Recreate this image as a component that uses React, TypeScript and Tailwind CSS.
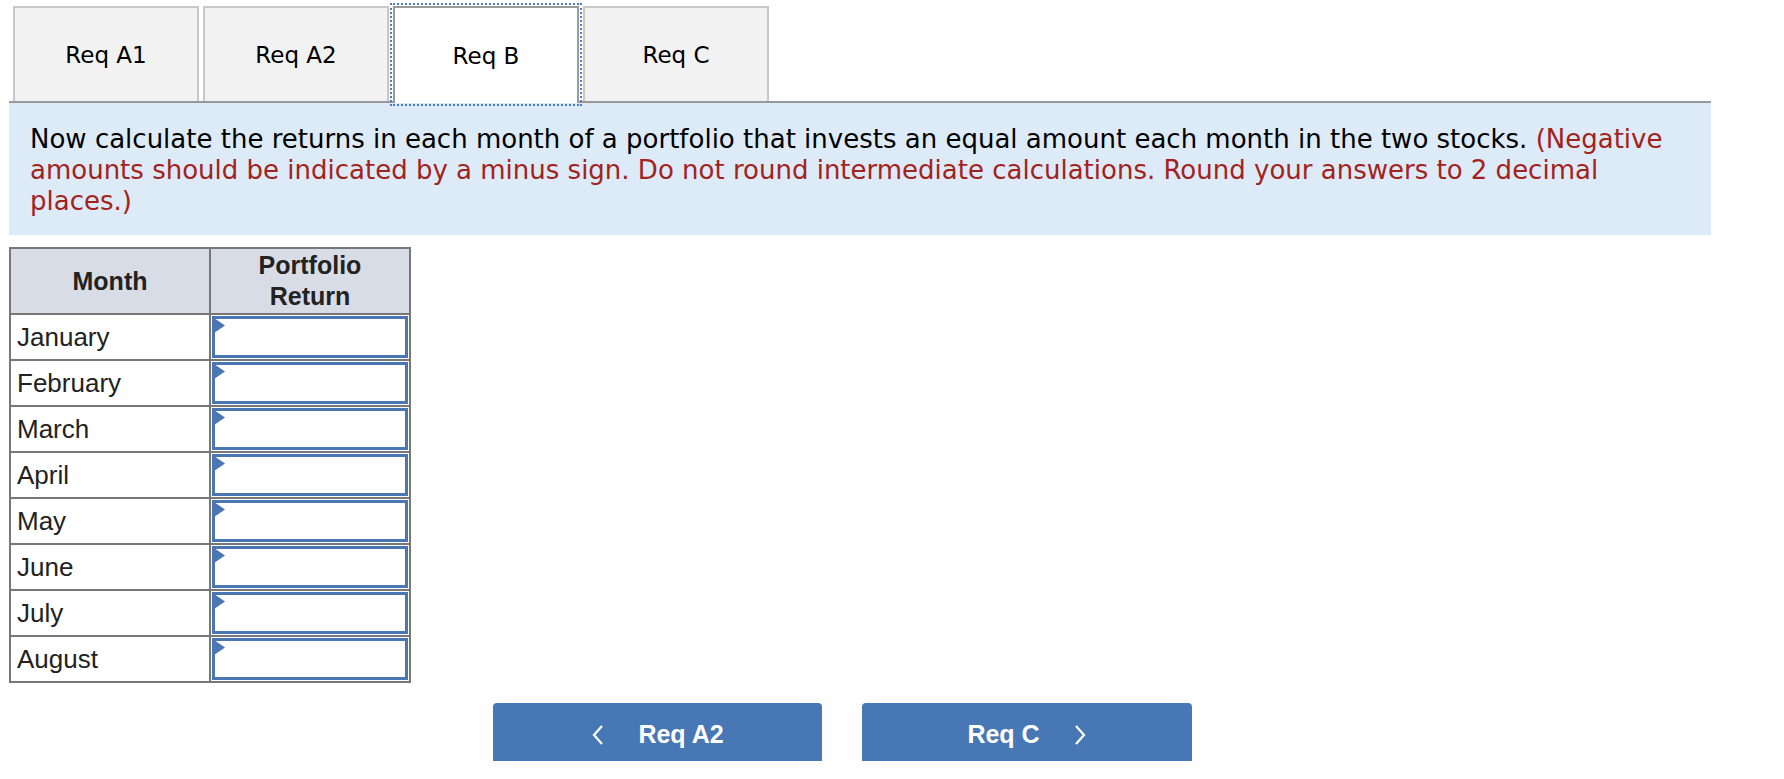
const tabs = ["Req A1", "Req A2", "Req B", "Req C"];
const months = ["January", "February", "March", "April", "May", "June", "July", "August"];

function Chevron({ dir }: { dir: "left" | "right" }) {
  return (
    <svg width="14" height="22" viewBox="0 0 14 22" fill="none" className="shrink-0">
      <polyline
        points={dir === "left" ? "11,2 3,11 11,20" : "3,2 11,11 3,20"}
        stroke="white"
        strokeWidth="2.2"
        strokeLinejoin="miter"
      />
    </svg>
  );
}

export default function App() {
  return (
    <div className="min-h-screen bg-white font-['DejaVu_Sans',Verdana,sans-serif] text-black">
      <div className="ml-[9px] w-[1702px] pt-[6px]">
        {/* Tabs */}
        <div className="flex gap-[4px] border-b-2 border-[#999] pl-[4px]">
          {tabs.map((t) => {
            const active = t === "Req B";
            return active ? (
              <div
                key={t}
                className="relative z-10 -mb-[2px] flex h-[97px] w-[186px] items-center justify-center border-x-2 border-t-2 border-[#9a9a9a] bg-white pt-[2px] text-[23px] outline-2 outline-offset-1 outline-dotted outline-[#4a7bc4]"
              >
                {t}
              </div>
            ) : (
              <div
                key={t}
                className="flex h-[95px] w-[186px] items-center justify-center border-x-2 border-t-2 border-[#c8c8c8] bg-[#f2f2f2] pt-[2px] text-[23px]"
              >
                {t}
              </div>
            );
          })}
        </div>

        {/* Instructions */}
        <p className="bg-[#ddeaf7] px-[21px] pt-[21px] pb-[18px] text-[26px] leading-[31px]">
          Now calculate the returns in each month of a portfolio that invests an equal amount each month in the two
          stocks.{" "}
          <span className="text-[#a3221c]">
            (Negative amounts should be indicated by a minus sign. Do not round intermediate calculations. Round your
            answers to 2 decimal places.)
          </span>
        </p>

        {/* Table */}
        <table className="mt-[12px] border-collapse font-['Liberation_Sans',Arial,sans-serif] text-[#222]">
          <thead>
            <tr className="bg-[#d8dce6] text-[25px]">
              <th className="h-[66px] w-[200px] border-2 border-[#777] px-2 font-bold leading-[31px]">Month</th>
              <th className="h-[66px] w-[200px] border-2 border-[#777] px-2 font-bold leading-[31px]">
                Portfolio
                <br />
                Return
              </th>
            </tr>
          </thead>
          <tbody className="text-[26px]">
            {months.map((m) => (
              <tr key={m}>
                <td className="h-[45px] border-2 border-[#777] px-[6px] text-left font-normal">{m}</td>
                <td className="h-[45px] border-2 border-[#777] p-[1px]">
                  <div className="relative h-[42px] w-full border-[3px] border-[#4a76b4] bg-white">
                    <svg
                      width="11"
                      height="15"
                      viewBox="0 0 11 15"
                      className="absolute -top-[1px] -left-[1px]"
                    >
                      <polygon points="0,0 11,7.5 0,15" fill="#4a76b4" />
                    </svg>
                  </div>
                </td>
              </tr>
            ))}
          </tbody>
        </table>
      </div>

      {/* Navigation buttons */}
      <div className="ml-[493px] mt-[20px] flex gap-[40px] font-['Liberation_Sans',Arial,sans-serif] text-[25px] font-bold text-white">
        <button className="flex h-[58px] w-[329px] items-center justify-center gap-[33px] rounded-t-[4px] bg-[#4877b5] pt-[5px]">
          <Chevron dir="left" />
          <span>Req A2</span>
        </button>
        <button className="flex h-[58px] w-[330px] items-center justify-center gap-[33px] rounded-t-[4px] bg-[#4877b5] pt-[5px]">
          <span>Req C</span>
          <Chevron dir="right" />
        </button>
      </div>
    </div>
  );
}
